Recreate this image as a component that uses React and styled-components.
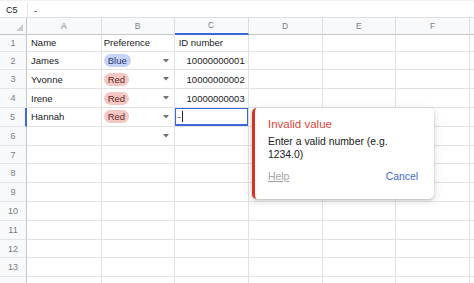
import React from 'react';
import styled, { createGlobalStyle } from 'styled-components';

const GlobalStyle = createGlobalStyle`
  html, body {
    margin: 0;
    padding: 0;
    background: #fff;
  }
  body {
    font-family: "Liberation Sans", Arial, sans-serif;
    color: #202124;
  }
  * { box-sizing: border-box; }
`;

// G is only a sliver at the right edge, so its letter stays hidden
const columns = ['A', 'B', 'C', 'D', 'E', 'F', ''];

const rows = [
  { name: 'Name', pref: 'Preference', id: 'ID number' },
  { name: 'James', chip: 'Blue', id: '10000000001' },
  { name: 'Yvonne', chip: 'Red', id: '10000000002' },
  { name: 'Irene', chip: 'Red', id: '10000000003' },
  { name: 'Hannah', chip: 'Red', editing: true },
  { arrow: true },
  {}, {}, {}, {}, {}, {}, {}, {},
];

function Arrow() {
  return (
    <ArrowIcon width="6" height="4" viewBox="0 0 6 4">
      <path d="M0 0h6L3 3.6z" fill="#707070" />
    </ArrowIcon>
  );
}

export default function App() {
  return (
    <Page>
      <GlobalStyle />
      <FormulaBar>
        <CellRef>C5</CellRef>
        <FormulaText>-</FormulaText>
      </FormulaBar>

      <Grid>
        <Corner>
          <CornerMark />
        </Corner>
        {columns.map((c, i) => (
          <ColHeader key={i} $active={c === 'C'}>{c}</ColHeader>
        ))}

        {rows.map((r, i) => {
          const n = i + 1;
          return (
            <React.Fragment key={n}>
              <RowHeader $active={n === 5}>{n <= 13 ? n : ''}</RowHeader>
              <Cell>{r.name}</Cell>
              <Cell $spread>
                {r.pref}
                {r.chip && <Chip $tone={r.chip}>{r.chip}</Chip>}
                {(r.chip || r.arrow) && <Arrow />}
              </Cell>
              {r.editing ? (
                <EditCell>
                  -<Caret />
                </EditCell>
              ) : (
                <Cell $right={!!r.chip}>{r.id}</Cell>
              )}
              <Cell />
              <Cell />
              <Cell />
              <Cell />
            </React.Fragment>
          );
        })}
      </Grid>

      <Popup>
        <PopupTitle>Invalid value</PopupTitle>
        <PopupBody>Enter a valid number (e.g. 1234.0)</PopupBody>
        <PopupActions>
          <HelpLink>Help</HelpLink>
          <CancelLink>Cancel</CancelLink>
        </PopupActions>
      </Popup>
    </Page>
  );
}

const Page = styled.div`
  position: relative;
  width: 474px;
  height: 283px;
  overflow: hidden;
  background: #fff;
`;

const FormulaBar = styled.div`
  display: flex;
  align-items: stretch;
  height: 18px;
  padding-top: 2px;
  border-top: 1px solid #f0f0f0;
  border-bottom: 1px solid #e0e0e0;
  background: #fff;
`;

const CellRef = styled.div`
  width: 28px;
  padding-left: 6px;
  display: flex;
  align-items: center;
  font-size: 9px;
  color: #202124;
  border-right: 1px solid #e6e6e6;
`;

const FormulaText = styled.div`
  padding-left: 6px;
  display: flex;
  align-items: center;
  font-size: 9.5px;
  color: #202124;
`;

const Grid = styled.div`
  display: grid;
  grid-template-columns: 27px 74.7px 73px 74px 74px 73.3px 74px 1fr;
  grid-template-rows: 16.7px 17px repeat(13, 18.8px);
  font-size: 9.5px;
`;

const HeaderBase = styled.div`
  background: #f8f9fa;
  color: #7a7e82;
  font-size: 8.5px;
  display: flex;
  align-items: center;
  justify-content: center;
`;

const Corner = styled(HeaderBase)`
  position: relative;
  border-right: 1px solid #c4c7c5;
  border-bottom: 1px solid #c4c7c5;
`;

const CornerMark = styled.div`
  position: absolute;
  right: 3px;
  bottom: 3px;
  width: 0;
  height: 0;
  border-left: 7px solid transparent;
  border-bottom: 7px solid #c9cbcd;
`;

const ColHeader = styled(HeaderBase)`
  border-right: 1px solid #dadce0;
  border-bottom: ${(p) => (p.$active ? '2px solid #3d68db' : '1px solid #c4c7c5')};
`;

const RowHeader = styled(HeaderBase)`
  font-size: 9px;
  border-bottom: 1px solid #e1e3e5;
  border-right: ${(p) => (p.$active ? '2px solid #3d68db' : '1px solid #c4c7c5')};
`;

const Cell = styled.div`
  display: flex;
  align-items: center;
  justify-content: ${(p) => (p.$spread ? 'space-between' : p.$right ? 'flex-end' : 'flex-start')};
  padding: ${(p) => (p.$spread ? '0 5px 0 2px' : '0 3px 0 4px')};
  border-right: 1px solid #e2e2e2;
  border-bottom: 1px solid #e2e2e2;
  color: #202124;
  white-space: nowrap;
  overflow: hidden;
`;

const EditCell = styled(Cell)`
  position: relative;
  padding-left: 3px;
  &::after {
    content: '';
    position: absolute;
    left: -1px;
    top: -1px;
    right: -1px;
    bottom: 0;
    border: 2px solid #3d68db;
  }
`;

const Caret = styled.span`
  display: inline-block;
  width: 1px;
  height: 11px;
  margin-left: 1px;
  background: #202124;
`;

const Chip = styled.span`
  display: inline-flex;
  align-items: center;
  height: 13px;
  padding: 0 4px;
  border-radius: 7px;
  background: ${(p) => (p.$tone === 'Blue' ? '#c6d4f7' : '#f4c7c3')};
  color: ${(p) => (p.$tone === 'Blue' ? '#263767' : '#5a2a27')};
  font-size: 9.5px;
`;

const ArrowIcon = styled.svg`
  margin-left: auto;
  flex-shrink: 0;
`;

const Popup = styled.div`
  position: absolute;
  left: 252px;
  top: 108px;
  width: 182px;
  padding: 8px 16px 15px 13px;
  background: #fff;
  border-left: 3px solid #d93025;
  border-radius: 5px;
  box-shadow: 0 1px 2px rgba(60, 64, 67, 0.25), 0 2px 6px 2px rgba(60, 64, 67, 0.12);
`;

const PopupTitle = styled.div`
  font-size: 11.5px;
  line-height: 16px;
  color: #d9463b;
`;

const PopupBody = styled.div`
  margin-top: 3px;
  font-size: 10.4px;
  line-height: 13.4px;
  color: #202124;
`;

const PopupActions = styled.div`
  display: flex;
  justify-content: space-between;
  align-items: center;
  margin-top: 8px;
  font-size: 10.4px;
  line-height: 14px;
`;

const HelpLink = styled.span`
  color: #a0a4a8;
  text-decoration: underline;
`;

const CancelLink = styled.span`
  color: #3f6ad8;
`;
